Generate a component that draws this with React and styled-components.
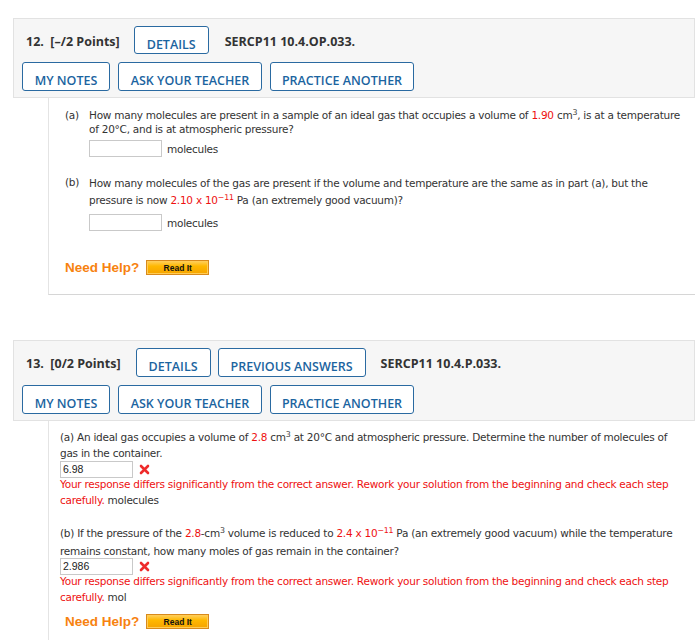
import React from "react";
import styled, { createGlobalStyle } from "styled-components";

const GlobalStyle = createGlobalStyle`
  * {
    margin: 0;
    padding: 0;
    box-sizing: border-box;
  }
  body {
    background: #ffffff;
    font-family: "DejaVu Sans", Verdana, sans-serif;
    color: #333333;
  }
`;

const Question = styled.section`
  margin-top: ${(p) => p.$top}px;
`;

const Header = styled.div`
  margin-left: 13px;
  background: #f6f6f6;
  border: 1px solid #e2e2e2;
  padding: 7px 8px 6px 8px;
  display: flex;
  flex-direction: column;
  gap: 8px;
`;

const HeaderRow = styled.div`
  display: flex;
  align-items: center;
  gap: ${(p) => p.$gap || 7}px;
`;

const HeaderText = styled.span`
  font-family: "Open Sans", sans-serif;
  font-weight: 700;
  font-size: 12.5px;
  color: #333;
  padding-top: 2px;
  margin-left: ${(p) => p.$ml || 0}px;
  margin-right: ${(p) => p.$mr || 0}px;
  white-space: pre;
`;

const Btn = styled.button`
  height: ${(p) => p.$h || 29}px;
  padding: 9px 0 0;
  border: 1.5px solid #2a6aa1;
  border-radius: 3px;
  background: #ffffff;
  color: #1b64a0;
  font-family: "Open Sans", sans-serif;
  font-weight: 600;
  font-size: 12.5px;
  line-height: 18px;
  white-space: nowrap;
  width: ${(p) => p.$w}px;
`;

const Body = styled.div`
  margin-left: 48px;
  border-left: 1px solid #e4e4e4;
  border-bottom: ${(p) => (p.$bottom ? "1.5px solid #d6d6d6" : "none")};
  padding: ${(p) => p.$pad};
  font-size: 10.5px;
  letter-spacing: -0.25px;
`;

const Part = styled.div`
  display: flex;
  margin-top: ${(p) => p.$mt || 0}px;
`;

const PartLabel = styled.span`
  width: 24px;
  flex: none;
  line-height: 14px;
`;

const PartMain = styled.div`
  flex: 1;
`;

const Para = styled.p`
  line-height: ${(p) => p.$lh || 14}px;
  margin-top: ${(p) => p.$mt || 0}px;
  color: #333;
`;

const Red = styled.span`
  color: #ee1111;
`;

const Sup = styled.sup`
  font-size: 0.75em;
  line-height: 0;
  vertical-align: 0.5em;
`;

const AnswerRow = styled.div`
  display: flex;
  align-items: center;
  margin-top: ${(p) => p.$mt || 0}px;
  gap: 5px;
`;

const Field = styled.div`
  width: ${(p) => p.$w}px;
  height: 17px;
  border: 1px solid #c9c9c9;
  background: #fff;
  font-family: "Liberation Sans", Arial, sans-serif;
  font-size: 10.5px;
  letter-spacing: 0;
  line-height: 15px;
  padding-left: 2px;
  color: #222;
`;

const Unit = styled.span`
  color: #333;
`;

const ErrorText = styled.p`
  color: #ee1111;
  line-height: 15.5px;
  margin-top: -1px;
`;

const Plain = styled.span`
  color: #333;
`;

const HelpRow = styled.div`
  display: flex;
  align-items: center;
  gap: 7px;
  margin-top: ${(p) => p.$mt}px;
  margin-left: ${(p) => p.$ml || 0}px;
  letter-spacing: 0;
`;

const HelpLabel = styled.span`
  font-family: "Liberation Sans", Arial, sans-serif;
  font-weight: 700;
  font-size: 13.5px;
  color: #f7820f;
`;

const ReadIt = styled.span`
  display: inline-flex;
  align-items: center;
  justify-content: center;
  width: 63px;
  height: 15px;
  border: 1px solid #d88a1c;
  background: linear-gradient(#ffd060, #ffb800 40%, #f5a300);
  box-shadow: inset 0 0 0 1px #ffcc55;
  font-family: "Liberation Sans", Arial, sans-serif;
  font-weight: 700;
  font-size: 8.5px;
  color: #111;
`;

function Cross() {
  return (
    <svg width="11" height="11" viewBox="0 0 11 11" style={{ marginLeft: 1 }}>
      <path d="M2 2 L9 9 M9 2 L2 9" stroke="#ee2b2b" strokeWidth="2.6" strokeLinecap="round" />
    </svg>
  );
}

function NeedHelp({ mt, ml }) {
  return (
    <HelpRow $mt={mt} $ml={ml}>
      <HelpLabel>Need Help?</HelpLabel>
      <ReadIt>Read It</ReadIt>
    </HelpRow>
  );
}

function ToolRow() {
  return (
    <HeaderRow $gap={8}>
      <Btn $w={88}>MY NOTES</Btn>
      <Btn $w={144}>ASK YOUR TEACHER</Btn>
      <Btn $w={144}>PRACTICE ANOTHER</Btn>
    </HeaderRow>
  );
}

function App() {
  return (
    <>
      <GlobalStyle />
      <Question $top={18}>
        <Header>
          <HeaderRow>
            <HeaderText $ml={4} $mr={7}>{"12.  [–/2 Points]"}</HeaderText>
            <Btn $h={28} $w={75}>DETAILS</Btn>
            <HeaderText $ml={9}>SERCP11 10.4.OP.033.</HeaderText>
          </HeaderRow>
          <ToolRow />
        </Header>
        <Body $bottom $pad="10px 8px 19px 16px">
          <Part>
            <PartLabel>(a)</PartLabel>
            <PartMain>
              <Para>
                How many molecules are present in a sample of an ideal gas that occupies a volume of{" "}
                <Red>1.90</Red> cm<Sup>3</Sup>, is at a temperature of 20°C, and is at atmospheric pressure?
              </Para>
              <AnswerRow $mt={4}>
                <Field $w={73} />
                <Unit>molecules</Unit>
              </AnswerRow>
            </PartMain>
          </Part>
          <Part $mt={18}>
            <PartLabel>(b)</PartLabel>
            <PartMain>
              <Para $lh={17}>
                How many molecules of the gas are present if the volume and temperature are the same as in part
                (a), but the pressure is now <Red>2.10 x 10<Sup>−11</Sup></Red> Pa (an extremely good vacuum)?
              </Para>
              <AnswerRow $mt={5}>
                <Field $w={73} />
                <Unit>molecules</Unit>
              </AnswerRow>
            </PartMain>
          </Part>
          <NeedHelp mt={29} />
        </Body>
      </Question>

      <Question $top={45}>
        <Header>
          <HeaderRow>
            <HeaderText $ml={4} $mr={8}>{"13.  [0/2 Points]"}</HeaderText>
            <Btn $h={29} $w={75}>DETAILS</Btn>
            <Btn $h={29} $w={148}>PREVIOUS ANSWERS</Btn>
            <HeaderText $ml={8}>SERCP11 10.4.P.033.</HeaderText>
          </HeaderRow>
          <ToolRow />
        </Header>
        <Body $pad="9px 20px 20px 11px">
          <Para $lh={15.5}>
            (a) An ideal gas occupies a volume of <Red>2.8</Red> cm<Sup>3</Sup> at 20°C and atmospheric pressure.
            Determine the number of molecules of gas in the container.
          </Para>
          <AnswerRow>
            <Field $w={73}>6.98</Field>
            <Cross />
          </AnswerRow>
          <ErrorText>
            Your response differs significantly from the correct answer. Rework your solution from the beginning
            and check each step carefully. <Plain>molecules</Plain>
          </ErrorText>
          <Para $lh={17.5} $mt={17}>
            (b) If the pressure of the <Red>2.8</Red>-cm<Sup>3</Sup> volume is reduced to{" "}
            <Red>2.4 x 10<Sup>−11</Sup></Red> Pa (an extremely good vacuum) while the temperature remains constant,
            how many moles of gas remain in the container?
          </Para>
          <AnswerRow $mt={-2}>
            <Field $w={73}>2.986</Field>
            <Cross />
          </AnswerRow>
          <ErrorText>
            Your response differs significantly from the correct answer. Rework your solution from the beginning
            and check each step carefully. <Plain>mol</Plain>
          </ErrorText>
          <NeedHelp mt={9} ml={5} />
        </Body>
      </Question>
    </>
  );
}

export default App;
